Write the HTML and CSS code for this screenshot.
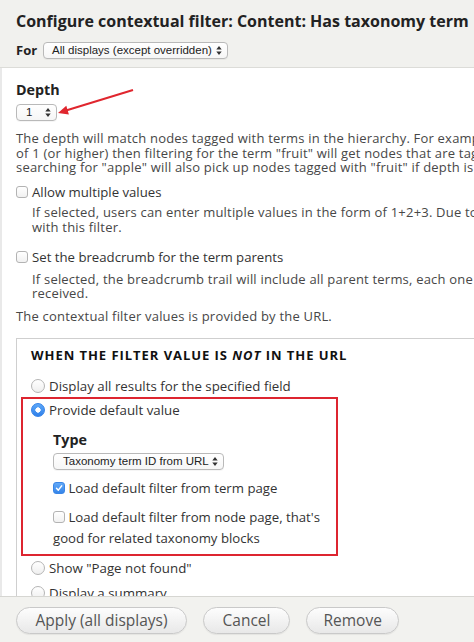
FILE: index.html
```html
<!DOCTYPE html>
<html>
<head>
<meta charset="utf-8">
<title>Configure contextual filter</title>
<link rel="stylesheet" href="styles.css">
</head>
<body>
<div class="page">
  <header class="header">
    <h1 class="title">Configure contextual filter: Content: Has taxonomy term</h1>
    <div class="for-row">
      <span class="for-label">For</span>
      <div class="select select-for">
        <span>All displays (except overridden)</span>
        <svg class="updown" viewBox="0 0 6 10"><path d="M3 0L6 4H0Z M0 6H6L3 10Z"/></svg>
      </div>
    </div>
  </header>

  <main class="content">
    <div class="inner">
      <div class="field-label">Depth</div>
      <div class="select select-depth">
        <span>1</span>
        <svg class="updown" viewBox="0 0 6 10"><path d="M3 0L6 4H0Z M0 6H6L3 10Z"/></svg>
      </div>
      <div class="desc desc-depth">The depth will match nodes tagged with terms in the hierarchy. For example, if you have the term "fruit" and a child term "apple", with a depth<br>of 1 (or higher) then filtering for the term "fruit" will get nodes that are tagged with "apple" as well as "fruit". If negative, the reverse is true;<br>searching for "apple" will also pick up nodes tagged with "fruit" if depth is -1 (or lower).</div>

      <div class="check-row row-multiple"><span class="checkbox"></span><span>Allow multiple values</span></div>
      <div class="desc desc-sub desc-multiple">If selected, users can enter multiple values in the form of 1+2+3. Due to the number of JOINs it would require, AND will be treated as OR<br>with this filter.</div>

      <div class="check-row row-breadcrumb"><span class="checkbox"></span><span>Set the breadcrumb for the term parents</span></div>
      <div class="desc desc-sub desc-breadcrumb">If selected, the breadcrumb trail will include all parent terms, each one linking to this view. Note that this only works if just one term was<br>received.</div>

      <div class="desc note">The contextual filter values is provided by the URL.</div>

      <div class="fieldset">
        <div class="legend">WHEN THE FILTER VALUE IS <em>NOT</em> IN THE URL</div>
        <div class="radio-row"><span class="radio"></span><span>Display all results for the specified field</span></div>
        <div class="highlight">
          <div class="radio-row"><span class="radio checked"></span><span>Provide default value</span></div>
          <div class="sub-options">
            <div class="field-label type-label">Type</div>
            <div class="select select-type">
              <span>Taxonomy term ID from URL</span>
              <svg class="updown" viewBox="0 0 6 10"><path d="M3 0L6 4H0Z M0 6H6L3 10Z"/></svg>
            </div>
            <div class="check-line line-term"><span class="checkbox checked"><svg viewBox="0 0 12 12"><path d="M3 6.3L5.2 8.6L9.2 3.4"/></svg></span> Load default filter from term page</div>
            <div class="check-line line-node"><span class="checkbox"></span> Load default filter from node page, that's<br>good for related taxonomy blocks</div>
          </div>
        </div>
        <div class="radio-row row-notfound"><span class="radio"></span><span>Show "Page not found"</span></div>
        <div class="radio-row row-summary"><span class="radio"></span><span>Display a summary</span></div>
      </div>
    </div>
  </main>

  <footer class="footer">
    <button class="btn btn-apply">Apply (all displays)</button>
    <button class="btn btn-cancel">Cancel</button>
    <button class="btn btn-remove">Remove</button>
  </footer>

  <svg class="arrow" viewBox="0 0 474 642" width="474" height="642">
    <line x1="133" y1="90" x2="66" y2="110.5" />
    <polygon points="58,113 68.9,114.4 66.3,105.8" />
  </svg>
</div>
</body>
</html>
```

FILE: styles.css
```css
* {
  box-sizing: border-box;
}

html,
body {
  margin: 0;
  padding: 0;
}

body {
  width: 474px;
  height: 642px;
  overflow: hidden;
  background: #ffffff;
  font-family: "Open Sans", "DejaVu Sans", sans-serif;
  color: #333333;
}

.page {
  position: relative;
  width: 474px;
  height: 642px;
  display: flex;
  flex-direction: column;
  overflow: hidden;
}

/* Header */
.header {
  flex: none;
  height: 68px;
  background: #f1f1ee;
  border-bottom: 1px solid #dcdcd8;
  padding: 10.5px 0 0 16px;
}

.title {
  margin: 0;
  font-size: 16px;
  line-height: 21px;
  font-weight: 700;
  color: #222222;
  white-space: nowrap;
}

.for-row {
  display: flex;
  align-items: center;
  gap: 6px;
  margin-top: 10.5px;
}

.for-label {
  font-size: 13px;
  line-height: 17px;
  font-weight: 700;
  color: #222222;
}

/* Select boxes */
.select {
  display: flex;
  align-items: center;
  justify-content: space-between;
  height: 17px;
  border: 1px solid #b9b9b9;
  border-radius: 4px;
  background: linear-gradient(#ffffff, #f6f6f6);
  font-family: "Liberation Sans", Arial, sans-serif;
  font-size: 11.5px;
  line-height: 15px;
  color: #222222;
  white-space: nowrap;
  padding: 0 5px 0 8px;
  box-shadow: 0 1px 0 rgba(0, 0, 0, 0.04);
}

.select-for {
  width: 185px;
}

.updown {
  flex: none;
  width: 6px;
  height: 9px;
  fill: #333333;
}

/* Content */
.content {
  flex: 1;
  min-height: 0;
  overflow: hidden;
  border-left: 2px solid #e9e9e9;
  padding: 12.4px 0 0 14px;
}

.inner {
  width: 900px;
}

.field-label {
  font-size: 14.3px;
  line-height: 20px;
  font-weight: 700;
  color: #222222;
}

.select-depth {
  width: 41px;
  margin-top: 4px;
  padding-left: 9px;
}

.desc {
  font-size: 13px;
  line-height: 14.5px;
  letter-spacing: 0.2px;
  color: #474747;
  white-space: nowrap;
}

.desc-depth {
  margin-top: 10px;
}

.desc-sub {
  margin-left: 16px;
  margin-top: 4px;
}

.check-row {
  display: flex;
  align-items: center;
  gap: 4px;
  font-size: 13.2px;
  line-height: 18px;
  color: #333333;
}

.row-multiple {
  margin-top: 8.5px;
}

.row-breadcrumb {
  margin-top: 14px;
}

.desc-breadcrumb {
  margin-top: 5.5px;
}

.note {
  margin-top: 8px;
}

.checkbox {
  flex: none;
  display: inline-block;
  width: 12px;
  height: 12px;
  border: 1px solid #b3b3b3;
  border-radius: 3px;
  background: linear-gradient(#ffffff, #f1f1f1);
  vertical-align: -1px;
}

.checkbox.checked {
  border-color: #3a86e6;
  background: linear-gradient(#62a9f7, #3585ea);
}

.checkbox svg {
  display: block;
  width: 10px;
  height: 10px;
  fill: none;
  stroke: #ffffff;
  stroke-width: 1.8;
  stroke-linecap: round;
  stroke-linejoin: round;
}

/* Fieldset */
.fieldset {
  margin-top: 14.5px;
  width: 700px;
  border-top: 1px solid #cfcfcf;
  border-left: 1px solid #cfcfcf;
  padding: 7px 0 0 14px;
}

.legend {
  font-size: 13px;
  line-height: 18px;
  font-weight: 700;
  letter-spacing: 0.95px;
  color: #111111;
}

.legend em {
  font-style: italic;
}

.radio-row {
  display: flex;
  align-items: center;
  gap: 4px;
  margin-top: 7px;
  font-size: 13.3px;
  line-height: 18px;
  color: #333333;
}

.legend + .radio-row {
  margin-top: 13px;
}

.radio {
  flex: none;
  width: 14px;
  height: 14px;
  border: 1px solid #b5b5b5;
  border-radius: 50%;
  background: linear-gradient(#ffffff, #efefef);
}

.radio.checked {
  border-color: #3482e8;
  background: radial-gradient(circle, #ffffff 0 2.4px, transparent 2.9px), linear-gradient(#5ea8f8, #2f80ea);
}

.highlight {
  width: 317px;
  margin: 2px 0 0 -10px;
  border: 2px solid #dd2530;
  padding: 2.5px 0 4px 8px;
}

.highlight .radio-row {
  margin-top: 0;
}

.sub-options {
  padding-left: 22px;
}

.type-label {
  margin-top: 10.7px;
}

.select-type {
  width: 171px;
  margin-top: 3px;
  padding-left: 9px;
}

.check-line {
  font-size: 13.2px;
  line-height: 21.5px;
  color: #333333;
  white-space: nowrap;
}

.line-term {
  margin-top: 7.6px;
}

.line-node {
  margin-top: 7.4px;
}

.row-notfound {
  margin-top: 3px;
}

/* Footer */
.footer {
  flex: none;
  height: 46px;
  background: #f2f2ef;
  border-top: 1px solid #d6d6d2;
  display: flex;
  align-items: flex-start;
  gap: 16px;
  padding: 9.7px 0 0 16px;
}

.btn {
  height: 27px;
  padding: 0 18.5px;
  border: 1px solid #c9c9c9;
  border-radius: 14px;
  background: linear-gradient(#fdfdfd, #e8e8e8);
  font-family: "Open Sans", "DejaVu Sans", sans-serif;
  font-size: 15.5px;
  line-height: 25px;
  color: #555555;
  box-shadow: 0 1px 1px rgba(0, 0, 0, 0.06);
}

.btn-remove {
  padding: 0 16.5px;
}

/* Annotation arrow overlay */
.arrow {
  position: absolute;
  left: 0;
  top: 0;
  pointer-events: none;
}

.arrow line {
  stroke: #e0262e;
  stroke-width: 2;
}

.arrow polygon {
  fill: #e0262e;
}
```
